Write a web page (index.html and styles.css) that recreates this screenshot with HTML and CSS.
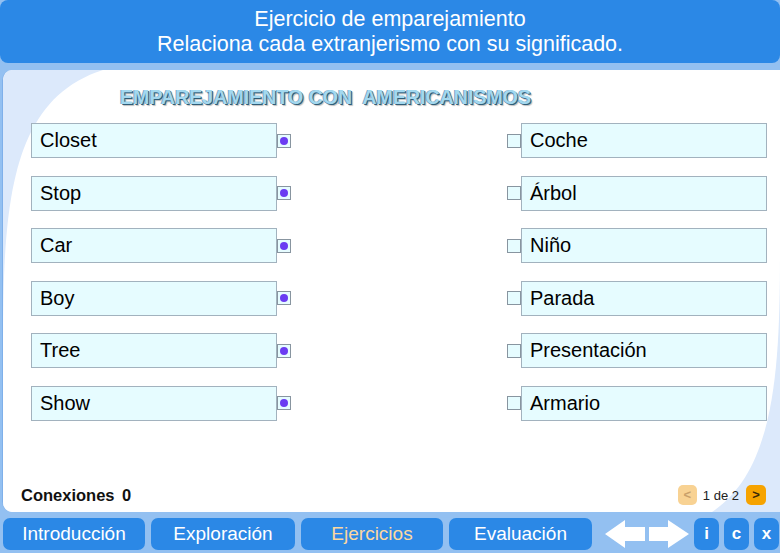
FILE: index.html
```html
<!DOCTYPE html>
<html lang="es">
<head>
  <meta charset="UTF-8" />
  <meta name="viewport" content="width=device-width, initial-scale=1.0"/>
  <title>Ejercicio de emparejamiento</title>
  <link rel="stylesheet" href="styles.css">
</head>
<body>

  <div class="app">

    <div class="header">
      <div>Ejercicio de emparejamiento</div>
      <div>Relaciona cada extranjerismo con su significado.</div>
    </div>

    <div class="panel">
      <!-- fondo decorativo -->
      <svg class="panel-bg" viewBox="0 0 777 442" preserveAspectRatio="none">
        <rect width="777" height="442" fill="#dce9fb"/>
        <path d="M100 0 L777 0 L777 180 C777 300 772 400 709 442 L0 442 L0 280 C0 140 5 30 100 0 Z" fill="#ffffff"/>
      </svg>

      <div class="panel-content">
        <div class="title">EMPAREJAMIENTO CON&nbsp; AMERICANISMOS</div>

        <div class="pairs">
          <div class="pair">
            <div class="item">Closet</div><span class="node on"></span><span></span><span class="node"></span><div class="item">Coche</div>
          </div>
          <div class="pair">
            <div class="item">Stop</div><span class="node on"></span><span></span><span class="node"></span><div class="item">Árbol</div>
          </div>
          <div class="pair">
            <div class="item">Car</div><span class="node on"></span><span></span><span class="node"></span><div class="item">Niño</div>
          </div>
          <div class="pair">
            <div class="item">Boy</div><span class="node on"></span><span></span><span class="node"></span><div class="item">Parada</div>
          </div>
          <div class="pair">
            <div class="item">Tree</div><span class="node on"></span><span></span><span class="node"></span><div class="item">Presentación</div>
          </div>
          <div class="pair">
            <div class="item">Show</div><span class="node on"></span><span></span><span class="node"></span><div class="item">Armario</div>
          </div>
        </div>

        <div class="footer">
          <div class="counter">Conexiones <span class="count">0</span></div>
          <div class="pager">
            <span class="page-btn prev">&lt;</span>
            <span class="page-text">1 de 2</span>
            <span class="page-btn next">&gt;</span>
          </div>
        </div>
      </div>
    </div>

    <div class="nav">
      <div class="nav-btn w142">Introducción</div>
      <div class="nav-btn w144">Exploración</div>
      <div class="nav-btn w142 active">Ejercicios</div>
      <div class="nav-btn w143">Evaluación</div>
      <svg class="arrows" viewBox="0 0 84 30" width="84" height="30">
        <polygon points="0,15 20,1 20,8 40,8 40,22 20,22 20,29" fill="#ffffff"/>
        <polygon points="44,8 63,8 63,1 84,15 63,29 63,22 44,22" fill="#ffffff"/>
      </svg>
      <div class="nav-btn small">i</div>
      <div class="nav-btn small">c</div>
      <div class="nav-btn small last">x</div>
    </div>

  </div>

</body>
</html>
```

FILE: styles.css
```css
body, html {
  margin: 0;
  padding: 0;
  width: 780px;
  height: 553px;
  overflow: hidden;
  font-family: "Liberation Sans", Arial, sans-serif;
  background-color: #93c0f1;
}

.app {
  display: flex;
  flex-direction: column;
  height: 553px;
}

.header {
  height: 56px;
  padding-top: 7px;
  background-color: #2b88e6;
  border-radius: 8px;
  color: white;
  font-size: 21.5px;
  line-height: 25px;
  text-align: center;
}

.panel {
  position: relative;
  margin: 7px 0 0 2px;
  height: 442px;
  border-left: 1px solid #7fb0ea;
  border-radius: 10px 0 0 10px;
  overflow: hidden;
  background-color: white;
}

.panel-bg {
  position: absolute;
  left: 0;
  top: 0;
  width: 100%;
  height: 100%;
}

.panel-content {
  position: relative;
  display: flex;
  flex-direction: column;
  height: 100%;
}

.title {
  margin-top: 16px;
  padding-left: 117px;
  font-size: 19.6px;
  line-height: 22px;
  font-weight: bold;
  color: #a3d8ef;
  text-shadow: 1px 1px 0 #2f5d78, -1px 0 0 #7aa6bf, 2px 2px 1px rgba(0,0,0,0.25);
}

.pairs {
  margin-top: 15px;
  padding-left: 28px;
  display: flex;
  flex-direction: column;
  gap: 17.6px;
}

.pair {
  display: grid;
  grid-template-columns: 246px 14px 216px 14px 246px;
  align-items: center;
  height: 35px;
}

.item {
  box-sizing: border-box;
  height: 35px;
  padding-left: 8px;
  background-color: #e6fcff;
  border: 1px solid #a2b2be;
  font-size: 20px;
  line-height: 33px;
  color: black;
}

.node {
  box-sizing: border-box;
  width: 14px;
  height: 14px;
  background-color: #e6fcff;
  border: 1px solid #8895a0;
  display: flex;
  justify-content: center;
  align-items: center;
}

.node.on::after {
  content: "";
  width: 8px;
  height: 8px;
  border-radius: 50%;
  background-color: #6a3cf2;
}

.footer {
  margin-top: auto;
  margin-bottom: 6px;
  height: 22px;
  padding: 0 14px 0 18px;
  display: flex;
  align-items: center;
  justify-content: space-between;
}

.counter {
  font-size: 16.5px;
  font-weight: bold;
  color: #111;
}

.count {
  margin-left: 3px;
}

.pager {
  display: flex;
  align-items: center;
}

.page-btn {
  width: 20px;
  height: 20px;
  border-radius: 5px;
  font-size: 13px;
  font-weight: bold;
  line-height: 20px;
  text-align: center;
}

.page-btn.prev {
  width: 19px;
  background-color: #f8d293;
  color: #c9a06a;
}

.page-btn.next {
  background-color: #f6a300;
  color: #3a2808;
}

.page-text {
  margin: 0 7px 0 6px;
  font-size: 13px;
  color: #222;
}

.nav {
  display: flex;
  align-items: center;
  padding: 6px 0 3px 3px;
  height: 32px;
}

.nav-btn {
  flex-shrink: 0;
  height: 32px;
  margin-right: 6px;
  border-radius: 7px;
  background-color: #2b88e6;
  color: white;
  font-size: 19px;
  line-height: 32px;
  text-align: center;
}

.nav-btn.active {
  color: #fcd8a0;
}

.w142 { width: 142px; }
.w143 { width: 143px; }
.w144 { width: 144px; }

.nav-btn.small {
  width: 25px;
  margin-right: 5px;
  font-size: 17px;
  font-weight: bold;
}

.nav-btn.last {
  margin-right: 0;
}

.arrows {
  flex-shrink: 0;
  margin: 0 5px 0 7px;
}
```
